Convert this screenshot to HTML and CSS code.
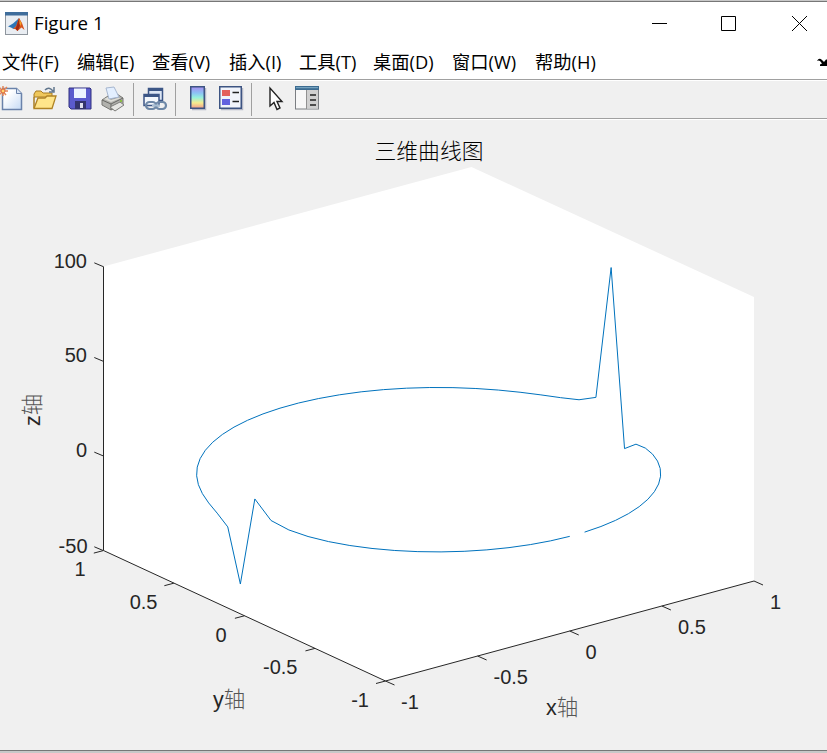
FILE: index.html
```html
<!DOCTYPE html>
<html lang="zh-CN">
<head>
  <meta charset="UTF-8">
  <meta name="viewport" content="width=device-width, initial-scale=1.0">
  <title>Figure 1</title>
  <link rel="stylesheet" href="styles.css">
</head>
<body>
  <div class="window">
    <header class="title-bar">
      <svg class="app-icon" width="24" height="24" viewBox="0 0 24 24">
        <rect x="0.5" y="0.5" width="22" height="22" fill="#e9edf2" stroke="#8e959d"/>
        <rect x="0" y="0" width="23" height="3.5" fill="#3f6d9b"/>
        <path d="M3 14.500L8 11.500L12 8L14 6L12.500 13L8.500 17L6 15.500Z" fill="#2f75b5"/>
        <path d="M8 17L11 14L14 6L17 11L19.500 18L16.500 15.500L12.500 19L10.500 17Z" fill="#d9541e"/>
        <path d="M14 6L15.500 10L14.500 15L12.500 19L10.500 17L12 13Z" fill="#a32a12"/>
        <path d="M14.300 7L16.500 11L15.500 14L14.500 12Z" fill="#f3a32b"/>
      </svg>
      <h1>Figure 1</h1>
      <div class="controls">
        <svg width="15" height="15" viewBox="0 0 15 15"><path d="M0 7.500H15"/></svg>
        <svg width="15" height="15" viewBox="0 0 15 15"><path d="M0.500 0.500H14.500V14.500H0.500Z"/></svg>
        <svg width="15" height="15" viewBox="0 0 15 15"><path d="M0 0L15 15M15 0L0 15"/></svg>
      </div>
    </header>

    <nav class="menu-bar">
      <span>文件(F)</span>
      <span>编辑(E)</span>
      <span>查看(V)</span>
      <span>插入(I)</span>
      <span>工具(T)</span>
      <span>桌面(D)</span>
      <span>窗口(W)</span>
      <span>帮助(H)</span>
      <svg class="dock" width="10" height="9" viewBox="0 0 10 9"><path d="M0 3Q2 -1 5 2L7 4L9 1.500H11V8H3V6.500L5 5.500L3 3Q1.500 2 0 3Z"/></svg>
    </nav>

    <div class="toolbar">
      <svg class="tool" width="24" height="26" viewBox="0 0 24 26">
        <defs>
          <linearGradient id="page" x1="0" y1="0" x2="1" y2="1"><stop offset="0.3" stop-color="#fff"/><stop offset="1" stop-color="#c5daf5"/></linearGradient>
          <linearGradient id="bar" x1="0" y1="0" x2="0" y2="1"><stop offset="0" stop-color="#a78cf0"/><stop offset="0.3" stop-color="#8cc4f4"/><stop offset="0.5" stop-color="#96f0dc"/><stop offset="0.75" stop-color="#f5ec8e"/><stop offset="1" stop-color="#f09c8c"/></linearGradient>
        </defs>
        <path d="M2.500 2.500H16.500L21.500 7.500V23.500H2.500Z" fill="url(#page)" stroke="#6a82aa" stroke-width="1.500"/>
        <path d="M16.500 2.500V7.500H21.500" fill="#d9e6f7" stroke="#6a82aa"/>
        <path d="M-1 1L6 9M7 1L-1 9M3 0V10M-2 5H8" stroke="#e58759" stroke-width="1.500"/>
        <circle cx="3" cy="5" r="2" fill="#ffd66e" stroke="#dc6840"/>
      </svg>
      <svg class="tool" width="26" height="26" viewBox="0 0 26 26">
        <path d="M2 22V8L4 5H9L11 7H20V11H2Z" fill="#efc75b" stroke="#a87c22"/>
        <path d="M2 22.500L6 12H13L15 10H24L20 22.500Z" fill="#ffe58a" stroke="#b08324" stroke-width="1.300"/>
        <path d="M13 4Q17 0 21 5M22 1V6H17" fill="none" stroke="#60758c" stroke-width="1.500"/>
      </svg>
      <svg class="tool" width="26" height="26" viewBox="0 0 26 26">
        <path d="M3 2H24L25 3V23H5L3 21V2Z" fill="#5b5bcd" stroke="#31317e"/>
        <rect x="8" y="2.500" width="12" height="9.500" fill="#eef4ff"/>
        <rect x="9" y="15" width="11" height="8" fill="#34346d"/>
        <rect x="14" y="17" width="3" height="5" fill="#e0e0ee"/>
      </svg>
      <svg class="tool" width="26" height="26" viewBox="0 0 26 26">
        <path d="M2 14L8 10L10 13L18 11L17 8L23 12V19L11 24L2 19Z" fill="#b1b1ad" stroke="#777773"/>
        <path d="M2 14L11 18L23 12M11 18V24" fill="none" stroke="#686865"/>
        <path d="M4 13L8 11L11 14L18 12L21 12L11 16Z" fill="#deded9"/>
        <path d="M6 2L14 1L19 11L9 13Z" fill="#e3efff" stroke="#a6b6cf"/>
        <path d="M10 21L20 16L24 19L15 25Z" fill="#e6e6e3" stroke="#7d7d7a"/>
        <path d="M20 15H22" stroke="#8cbd46" stroke-width="2"/>
      </svg>
      <i class="separator"></i>
      <svg class="tool link" width="26" height="26" viewBox="0 0 26 26">
        <path d="M6.500 2.500H20.500V14.500H6.500Z" fill="#dce6f4" stroke="#3c5686" stroke-width="1.500"/>
        <path d="M6 3.500H21" stroke="#3c5686" stroke-width="3"/>
        <path d="M2 8.500H17V19.500H2Z" fill="#f3f7fc" stroke="#3c5686" stroke-width="1.500"/>
        <path d="M2 9.500H17" stroke="#3c5686" stroke-width="3"/>
        <g fill="none" stroke="#6d87a6" stroke-width="2.200"><rect x="4" y="16" width="10" height="7" rx="3.500"/><rect x="14" y="16" width="10" height="7" rx="3.500"/></g>
        <path d="M10 19.500H18" stroke="#a9bfd3" stroke-width="2"/>
      </svg>
      <i class="separator"></i>
      <svg class="tool colorbar" width="18" height="26" viewBox="0 0 18 26">
        <path d="M3 23.500H16.500V2" fill="none" stroke="#b4b7c5" stroke-width="1.500"/>
        <rect x="1.750" y="0.750" width="13.500" height="21.500" fill="url(#bar)" stroke="#3d5482" stroke-width="1.500"/>
      </svg>
      <svg class="tool legend" width="26" height="26" viewBox="0 0 26 26">
        <path d="M3 23.500H24.500V2" fill="none" stroke="#b4b7c5" stroke-width="1.500"/>
        <rect x="1.750" y="0.750" width="21.500" height="21.500" fill="#f1f4fb" stroke="#3d5482" stroke-width="1.500"/>
        <rect x="4" y="4" width="8" height="6" fill="#e3605c"/>
        <rect x="4" y="13" width="8" height="6" fill="#6262df"/>
        <path d="M14.500 6.500H21M14.500 15.500H21" stroke="#222" stroke-width="1.500"/>
      </svg>
      <i class="separator"></i>
      <svg class="tool pointer" width="16" height="26" viewBox="0 0 16 26">
        <path d="M2 2V20L6 16.500L9 23.500L12 22L9 15.500H14Z" fill="#fff" stroke="#222" stroke-width="1.400"/>
      </svg>
      <svg class="tool inspector" width="26" height="26" viewBox="0 0 26 26">
        <rect x="1.500" y="0.500" width="23" height="22.500" fill="#f7f7f7" stroke="#7b7e82"/>
        <rect x="13" y="4" width="11" height="18.500" fill="#d0d0d0"/>
        <rect x="1" y="0" width="24" height="4" fill="#3c6b90"/>
        <path d="M2 1.700H24" stroke="#82afcb"/>
        <path d="M12.500 4V23" stroke="#919191"/>
        <path d="M16 9H22M16 14H22M16 19H22" stroke="#222" stroke-width="1.500"/>
      </svg>
    </div>

    <main class="figure">
      <svg id="plot" width="827" height="630" viewBox="0 120 827 630">
        <path class="box" d="M103.500 266.500L471.500 167L754 297V581L385.500 681L103.500 550.500Z"/>
        <path class="axis" d="M103.500 266.500V550.500L385.500 681L754 581"/>
        <path class="axis" id="ticks"/>
        <path id="curve"/>
        <text class="title" x="374.500" y="158.500">三维曲线图</text>
        <g class="labels end">
          <text x="87" y="268">100</text>
          <text x="87" y="362">50</text>
          <text x="87" y="457">0</text>
          <text x="87.500" y="552.500">-50</text>
          <text x="85.500" y="576">1</text>
          <text x="157.500" y="609">0.5</text>
          <text x="226.500" y="642">0</text>
          <text x="297.500" y="674">-0.5</text>
          <text x="369" y="707">-1</text>
        </g>
        <g class="labels">
          <text x="401" y="709">-1</text>
          <text x="493.500" y="684">-0.5</text>
          <text x="585.500" y="659">0</text>
          <text x="678" y="634">0.5</text>
          <text x="770" y="609">1</text>
        </g>
        <text class="name" x="546" y="714.500">x<tspan>轴</tspan></text>
        <text class="name" x="213" y="706.500">y<tspan>轴</tspan></text>
        <text class="name" transform="translate(40 426) rotate(-90)">z<tspan>轴</tspan></text>
      </svg>
    </main>
  </div>

  <script>
    // Project a data point to plot coordinates
    function project(x, y, z) {
      return [
        385.5 + 184.25 * (x + 1) - 141.1 * (y + 1),
        681 - 50 * (x + 1) - 65.2 * (y + 1) - 1.893 * (z + 50)
      ];
    }

    // x = sin(t), y = cos(t), z = tan(t), t = -pi:0.1:pi
    const points = [];
    for (let i = 0; i <= 62; i++) {
      const t = -Math.PI + i * 0.1;
      points.push(project(Math.sin(t), Math.cos(t), Math.tan(t)).map(v => v.toFixed(2)).join(','));
    }
    document.getElementById('curve').setAttribute('d', 'M' + points.join('L'));

    let ticks = '';
    for (let v = -1; v <= 1; v += 0.5) {
      const a = project(v, -1, -50);
      const b = project(-1, v, -50);
      ticks += `M${a[0]} ${a[1]}l9 4M${b[0]} ${b[1]}l-9.500 2.500`;
    }
    for (let z = -50; z <= 100; z += 50) {
      const c = project(-1, 1, z);
      ticks += `M${c[0]} ${c[1]}l-9 -3.800`;
    }
    document.getElementById('ticks').setAttribute('d', ticks);
  </script>
</body>
</html>
```
FILE: styles.css
```css
* {
  box-sizing: border-box;
}
body {
  margin: 0;
  background: #c8c8c8;
  font-family: "Noto Sans", "Noto Sans CJK SC", sans-serif;
  color: #000;
  overflow: hidden;
}
.window {
  width: 827px;
  height: 750px;
  margin-top: 1px;
  border-top: 1px solid #777;
  border-bottom: 1px solid #777;
  background: #f0f0f0;
}
.title-bar {
  display: flex;
  align-items: center;
  height: 42px;
  padding: 0 20px 0 5px;
  background: #fff;
}
.app-icon {
  margin-top: 1px;
}
h1 {
  margin: 0 0 2px 5px;
  font-family: "Open Sans", sans-serif;
  font-size: 18.700px;
  font-weight: 400;
}
.controls {
  display: flex;
  gap: 54px;
  margin: 1px 0 0 auto;
}
.controls svg {
  fill: none;
  stroke: #000;
}
.controls svg:nth-child(2) {
  margin-right: 2px;
}
.menu-bar {
  display: grid;
  grid-template-columns: 75px 75px 77px 70px 74px 79px 83px 1fr 10px;
  align-items: center;
  height: 36px;
  padding: 0 0 2px 2px;
  background: #fff;
  border-bottom: 1px solid #a0a0a0;
  font-family: "Open Sans", "Noto Sans CJK SC", sans-serif;
  font-size: 18.300px;
  font-weight: 400;
  white-space: nowrap;
}
.dock {
  margin-top: 3px;
}
.toolbar {
  display: flex;
  align-items: center;
  height: 39px;
  padding-bottom: 2px;
  border-top: 1px solid #fff;
  border-bottom: 1px solid #a0a0a0;
}
.tool {
  flex: none;
  margin-right: 8px;
}
.tool:nth-child(4) {
  margin-right: 7px;
}
.separator {
  width: 1px;
  height: 33px;
  margin-top: 2px;
  background: #a0a0a0;
}
.link {
  margin: 0 7px 0 8px;
}
.colorbar {
  margin: 0 11px 0 13px;
}
.legend {
  margin-right: 7px;
}
.pointer {
  margin: 0 10px 0 16px;
}
.figure {
  height: 631px;
  border-top: 1px solid #fff;
}
.figure svg {
  display: block;
}
.box {
  fill: #fff;
}
.axis {
  fill: none;
  stroke: #262626;
}
#curve {
  fill: none;
  stroke: #0072bd;
  stroke-width: 1;
}
.labels {
  font: 20px "Liberation Sans", sans-serif;
  fill: #262626;
}
.end {
  text-anchor: end;
}
.title,
.name {
  font-family: "Liberation Sans", "Noto Sans CJK SC", sans-serif;
  font-weight: 300;
  fill: #262626;
}
.title {
  font-size: 21.800px;
  fill: #000;
}
.name {
  font-size: 21.500px;
}
.name tspan {
  fill: #555;
}
```
